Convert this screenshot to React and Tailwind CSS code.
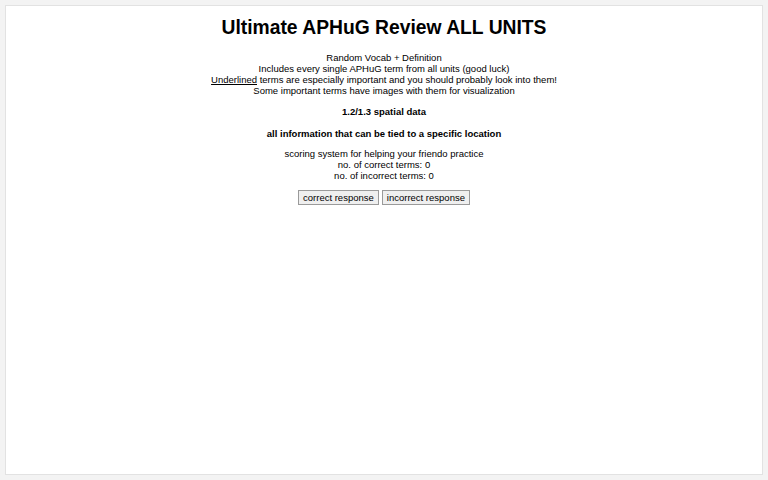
import React, { useState } from "react"

export default function App() {
  const [correct, setCorrect] = useState(0)
  const [incorrect, setIncorrect] = useState(0)

  return (
    <div className="min-h-[480px] bg-[#f3f3f3] p-[5px] font-['Liberation_Sans',Arial,sans-serif] text-black">
      <div className="h-[470px] border border-[#e2e2e2] bg-white text-center">
        <h1 className="pt-[10px] text-[19.3px] font-bold leading-[24px]">Ultimate APHuG Review ALL UNITS</h1>

        <div className="mt-[12px] text-[9.5px] leading-[11px]">
          <p>Random Vocab + Definition</p>
          <p>Includes every single APHuG term from all units (good luck)</p>
          <p>
            <span className="underline">Underlined</span> terms are especially important and you should probably look into them!
          </p>
          <p>Some important terms have images with them for visualization</p>
        </div>

        <p className="mt-[10px] text-[9.5px] font-bold leading-[11px]">1.2/1.3 spatial data</p>
        <p className="mt-[11px] text-[9.5px] font-bold leading-[11px]">all information that can be tied to a specific location</p>

        <div className="mt-[9px] text-[9.5px] leading-[11px]">
          <p>scoring system for helping your friendo practice</p>
          <p>no. of correct terms: {correct}</p>
          <p>no. of incorrect terms: {incorrect}</p>
        </div>

        <div className="mt-[9px] flex justify-center gap-[3px]">
          <button
            onClick={() => setCorrect(correct + 1)}
            className="h-[15px] border border-[#9a9a9a] bg-[#efefef] px-[4px] text-[9.5px] leading-[13px]"
          >
            correct response
          </button>
          <button
            onClick={() => setIncorrect(incorrect + 1)}
            className="h-[15px] border border-[#9a9a9a] bg-[#efefef] px-[4px] text-[9.5px] leading-[13px]"
          >
            incorrect response
          </button>
        </div>
      </div>
    </div>
  )
}
